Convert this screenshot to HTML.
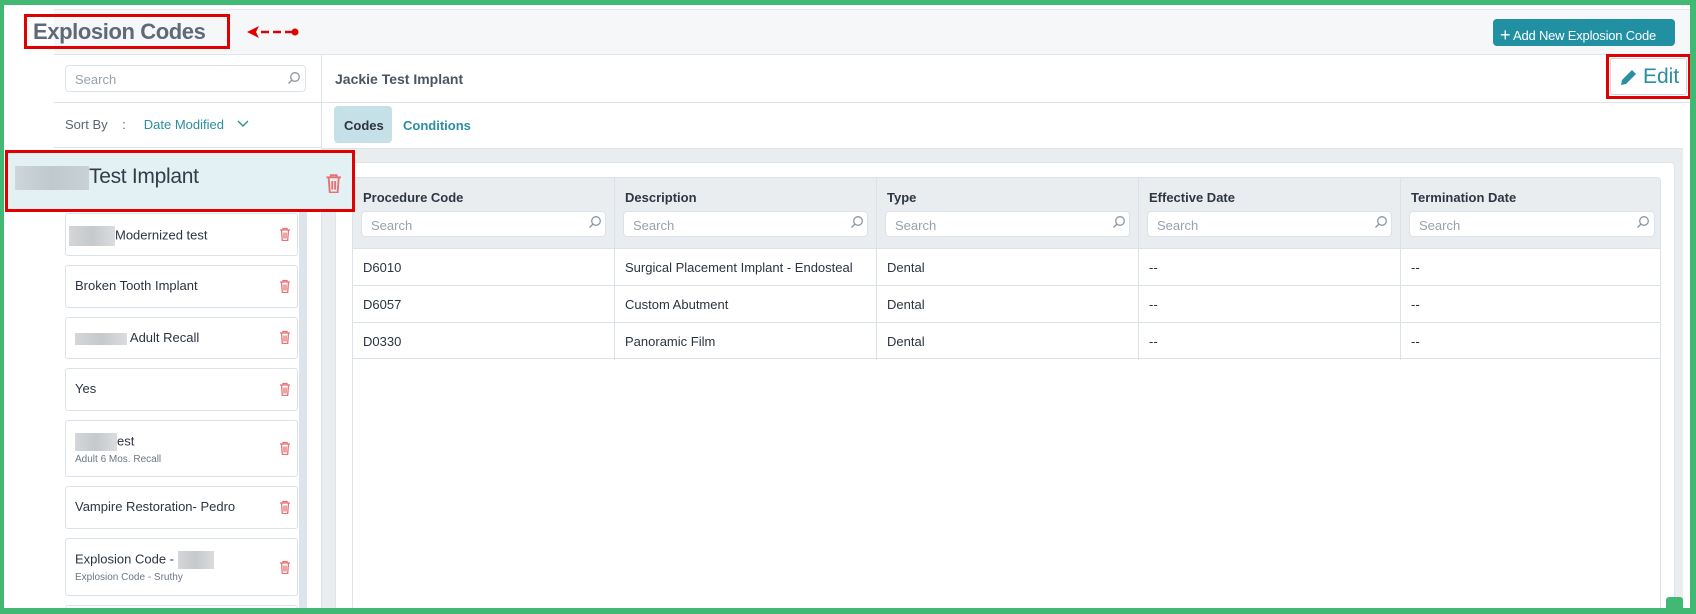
<!DOCTYPE html>
<html><head><meta charset="utf-8">
<style>
*{box-sizing:border-box;margin:0;padding:0}
html,body{width:1696px;height:614px;overflow:hidden}
body{background:#41b874;font-family:"Liberation Sans",Arial,sans-serif;position:relative}
.abs{position:absolute}
#page{position:absolute;left:4px;top:5px;width:1686px;height:603px;background:#fff;overflow:hidden}
.card{position:absolute;left:61px;width:233px;background:#fff;border:1px solid #dbe2ea;border-radius:3px;font-size:13px;color:#2b3440}
.card .t{position:absolute;left:9px;top:12px}
.card .s{position:absolute;left:9px;top:33px;font-size:10px;color:#6b7785}
.blur{display:inline-block;background:linear-gradient(90deg,#d4d6d8,#c6c9cc,#dadcdd);vertical-align:middle}
.th{position:absolute;top:0;height:70px;border-right:1px solid #dbe2ea}
.th b{position:absolute;left:10px;top:12px;font-size:13px;color:#2d3642}
.sb{position:absolute;left:8px;right:8px;top:33px;height:26px;background:#fff;border:1px solid #dbe2ea;border-radius:4px;font-size:13px;color:#98a2ad;padding:6px 9px}
.row{position:absolute;left:0;right:0;height:37px;border-top:1px solid #dbe2ea;font-size:13px;color:#2b3440}
.row span{position:absolute;top:11px}
.vl{position:absolute;width:1px;background:#dbe2ea}
</style></head><body>
<div id="page">
 <div class="abs" style="left:50px;top:4px;right:0;height:46px;background:#f6f7f9;border-top:1px solid #e3e7eb;border-bottom:1px solid #dfe4e9"></div>
 <div class="abs" style="left:20px;top:9px;width:206px;height:35px;border:3px solid #e00000"></div>
 <div class="abs" style="left:29px;top:14px;font-size:22px;font-weight:bold;color:#5e6a78;letter-spacing:-0.4px">Explosion Codes</div>
 <svg class="abs" style="left:243px;top:21px" width="52" height="12"><path d="M14 6 H48" stroke="#e00000" stroke-width="2.5" stroke-dasharray="8 4"/><path d="M0 6 L12 0 L9 6 L12 12Z" fill="#e00000"/><circle cx="48" cy="6" r="3.5" fill="#e00000"/></svg>
 <div class="abs" style="left:1489px;top:14px;width:182px;height:27px;background:#2190a2;border-radius:4px;color:#fff;font-size:13px;padding:5px 0 0 7px;white-space:nowrap;letter-spacing:-0.2px"><span style="font-size:18px;position:relative;top:1px">+</span> Add New Explosion Code</div>

 <div class="abs" style="left:317px;top:50px;width:1px;height:560px;background:#dfe4e9"></div>
 <div class="abs" style="left:61px;top:60px;width:241px;height:27px;border:1px solid #dbe2ea;border-radius:4px;font-size:13px;color:#98a2ad;padding:6px 9px">Search</div>
 <svg class="abs" style="left:283px;top:66px" width="14" height="14"><use href="#sr"/></svg>
 <div class="abs" style="left:50px;top:97px;width:267px;height:1px;background:#dfe4e9"></div>
 <div class="abs" style="left:61px;top:112px;font-size:13px;color:#5b6672">Sort By &nbsp;&nbsp;&nbsp;:&nbsp;&nbsp;&nbsp;&nbsp; <span style="color:#2a8fa0">Date Modified</span></div>
 <svg class="abs" style="left:233px;top:115px" width="12" height="8"><path d="M1 1 L6 6 L11 1" fill="none" stroke="#2a8fa0" stroke-width="1.4"/></svg>
 <div class="abs" style="left:50px;top:142px;width:267px;height:1px;background:#dfe4e9"></div>

 <div class="abs" style="left:318px;top:143px;right:0;bottom:0;background:#e9edf0;border-top:1px solid #dfe4e9"></div>
 <div class="abs" style="left:331px;top:157px;width:1340px;height:450px;background:#fff;border:1px solid #dfe4e9;border-radius:4px"></div>
 <div class="abs" style="left:1679px;top:143px;width:7px;bottom:0;background:#fff"></div>
 <div class="abs" style="left:1662px;top:592px;width:17px;height:11px;background:#41b874;border-radius:3px 3px 0 0"></div>

 <div class="abs" style="left:295px;top:207px;width:8px;height:400px;background:#dde4ec"></div>
 <div class="card" style="top:208px;height:43px"><div class="t"><span class="blur" style="width:46px;height:20px;margin-left:-6px"></span>Modernized test</div></div>
 <div class="card" style="top:260px;height:43px"><div class="t">Broken Tooth Implant</div></div>
 <div class="card" style="top:312px;height:42px"><div class="t"><span class="blur" style="width:52px;height:12px"></span> Adult Recall</div></div>
 <div class="card" style="top:363px;height:43px"><div class="t">Yes</div></div>
 <div class="card" style="top:415px;height:57px"><div class="t"><span class="blur" style="width:42px;height:18px"></span>est</div><div class="s">Adult 6 Mos. Recall</div></div>
 <div class="card" style="top:481px;height:43px"><div class="t">Vampire Restoration- Pedro</div></div>
 <div class="card" style="top:533px;height:58px"><div class="t">Explosion Code - <span class="blur" style="width:36px;height:18px"></span></div><div class="s">Explosion Code - Sruthy</div></div>
 <div class="card" style="top:600px;height:10px"></div>

 <div class="abs" style="left:1px;top:145px;width:350px;height:62px;background:#e3f1f5;border:3px solid #e00000;z-index:2"></div>
 <div class="abs" style="left:11px;top:161px;width:74px;height:24px;background:linear-gradient(90deg,#cdd6da,#bfc9ce,#c8d1d5);z-index:3"></div>
 <div class="abs" style="left:85px;top:160px;font-size:21px;color:#333c47;z-index:3;letter-spacing:-0.3px">Test Implant</div>
 <svg class="abs" style="left:321px;top:168px;z-index:3" width="18" height="20"><g transform="scale(1.45)"><use href="#tr"/></g></svg>

 <div class="abs" style="left:331px;top:66px;font-size:14px;font-weight:bold;color:#4a5563">Jackie Test Implant</div>
 <div class="abs" style="left:1602px;top:49px;width:85px;height:45px;border:3px solid #e00000"></div>
 <div class="abs" style="left:1606px;top:53px;width:77px;height:37px;border:1px solid #cfd8df;border-radius:3px;background:#fff"></div>
 <svg class="abs" style="left:1616px;top:63px" width="18" height="18"><path d="M1 17 L2 12 L12 2 L16 6 L6 16 Z" fill="#2a8fa0"/></svg>
 <div class="abs" style="left:1639px;top:60px;font-size:21px;color:#2a8fa0">Edit</div>
 <div class="abs" style="left:318px;top:97px;right:0;height:1px;background:#dfe4e9"></div>
 <div class="abs" style="left:330px;top:101px;width:58px;height:37px;background:#c5e0e6;border-radius:4px;font-size:13px;font-weight:bold;color:#2b3440;padding:12px 0 0 10px">Codes</div>
 <div class="abs" style="left:399px;top:113px;font-size:13px;font-weight:bold;color:#2a8fa0">Conditions</div>

 <div class="abs" style="left:348px;top:172px;width:1309px;height:440px;border:1px solid #dbe2ea;border-radius:4px 4px 0 0;overflow:hidden">
  <div class="abs" style="left:0;top:0;right:0;height:70px;background:#e9edf0"></div>
  <div class="th" style="left:0;width:262px"><b>Procedure Code</b><div class="sb">Search</div></div>
  <div class="th" style="left:262px;width:262px"><b>Description</b><div class="sb">Search</div></div>
  <div class="th" style="left:524px;width:262px"><b>Type</b><div class="sb">Search</div></div>
  <div class="th" style="left:786px;width:262px"><b>Effective Date</b><div class="sb">Search</div></div>
  <div class="th" style="left:1048px;width:262px;border-right:none"><b>Termination Date</b><div class="sb">Search</div></div>
  <div class="row" style="top:70px"><span style="left:10px">D6010</span><span style="left:272px">Surgical Placement Implant - Endosteal</span><span style="left:534px">Dental</span><span style="left:796px">--</span><span style="left:1058px">--</span></div>
  <div class="row" style="top:107px"><span style="left:10px">D6057</span><span style="left:272px">Custom Abutment</span><span style="left:534px">Dental</span><span style="left:796px">--</span><span style="left:1058px">--</span></div>
  <div class="row" style="top:144px;border-bottom:1px solid #dbe2ea"><span style="left:10px">D0330</span><span style="left:272px">Panoramic Film</span><span style="left:534px">Dental</span><span style="left:796px">--</span><span style="left:1058px">--</span></div>
  <div class="vl" style="left:261px;top:70px;height:112px"></div>
  <div class="vl" style="left:523px;top:70px;height:112px"></div>
  <div class="vl" style="left:785px;top:70px;height:112px"></div>
  <div class="vl" style="left:1047px;top:70px;height:112px"></div>
 </div>
 <svg width="0" height="0" style="position:absolute"><defs><g id="tr"><path d="M1 3 H11 M4 3 V1.5 H8 V3 M2.5 3 L3.3 13.5 H8.7 L9.5 3 M5 5.5 V11.5 M7 5.5 V11.5" fill="none" stroke="#e57373" stroke-width="1.3"/></g><g id="sr"><circle cx="8" cy="6" r="4.3" fill="none" stroke="#8b96a2" stroke-width="1.3"/><path d="M5 9 L1.5 12.5" stroke="#8b96a2" stroke-width="1.3"/></g></defs></svg>
 <svg class="abs" style="left:584px;top:210px" width="14" height="14"><use href="#sr"/></svg>
 <svg class="abs" style="left:846px;top:210px" width="14" height="14"><use href="#sr"/></svg>
 <svg class="abs" style="left:1108px;top:210px" width="14" height="14"><use href="#sr"/></svg>
 <svg class="abs" style="left:1370px;top:210px" width="14" height="14"><use href="#sr"/></svg>
 <svg class="abs" style="left:1632px;top:210px" width="14" height="14"><use href="#sr"/></svg>
 <svg class="abs" style="left:275px;top:222px" width="12" height="14"><use href="#tr"/></svg>
 <svg class="abs" style="left:275px;top:274px" width="12" height="14"><use href="#tr"/></svg>
 <svg class="abs" style="left:275px;top:325px" width="12" height="14"><use href="#tr"/></svg>
 <svg class="abs" style="left:275px;top:377px" width="12" height="14"><use href="#tr"/></svg>
 <svg class="abs" style="left:275px;top:436px" width="12" height="14"><use href="#tr"/></svg>
 <svg class="abs" style="left:275px;top:495px" width="12" height="14"><use href="#tr"/></svg>
 <svg class="abs" style="left:275px;top:555px" width="12" height="14"><use href="#tr"/></svg>
</div>
</body></html>
